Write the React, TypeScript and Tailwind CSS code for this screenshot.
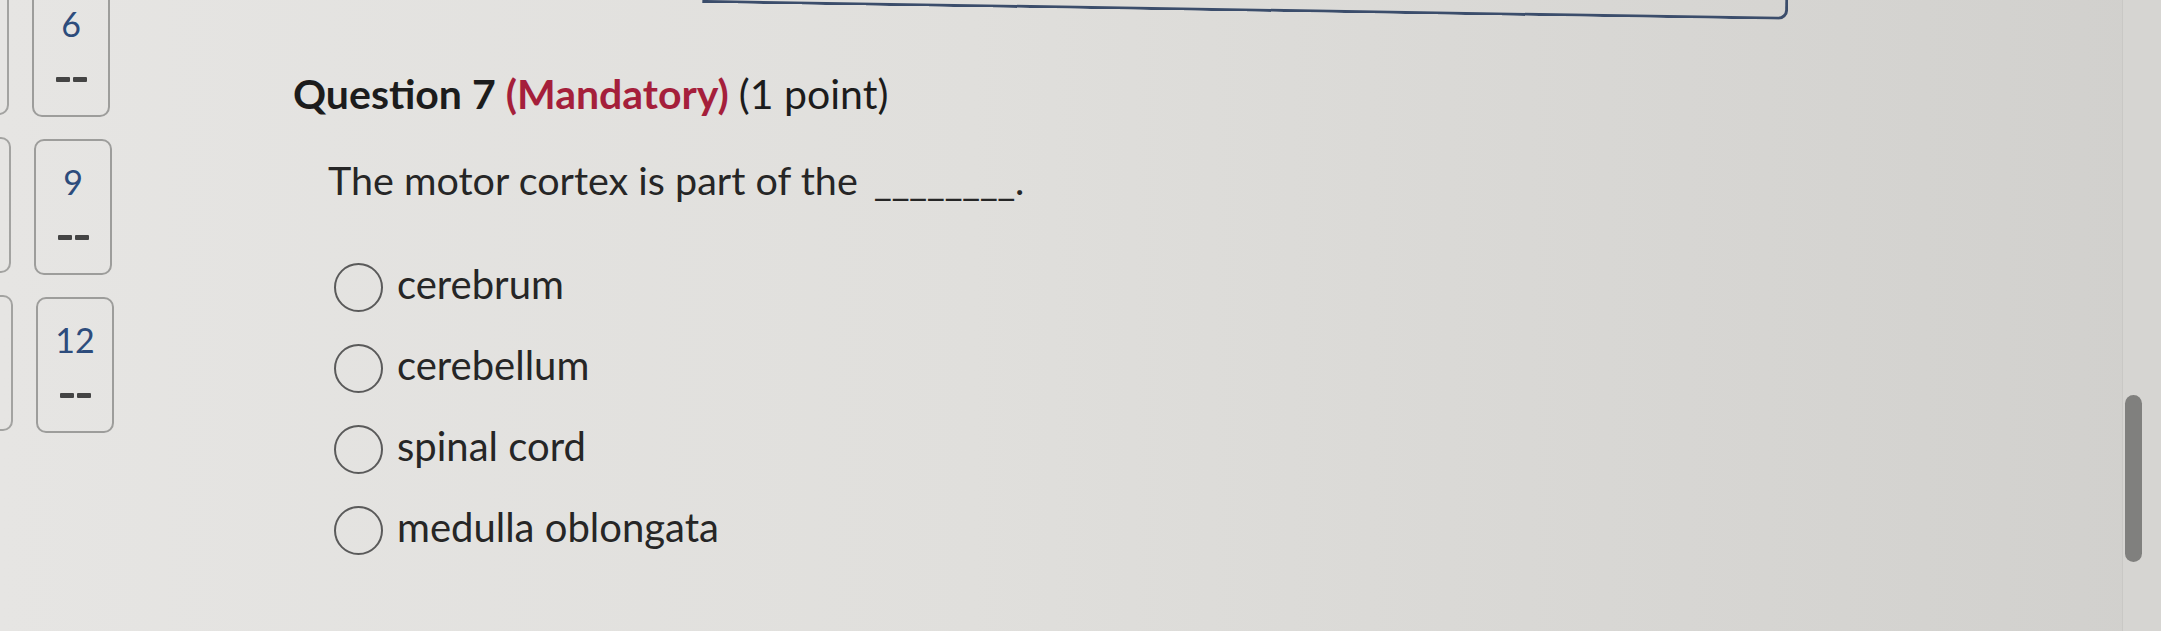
import React from "react";

const font = { fontFamily: "Lato, 'Noto Sans', 'Liberation Sans', sans-serif" };

function NavBox({ num, top }: { num: string; top?: boolean }) {
  return (
    <div
      className={
        "w-[78px] h-[136px] rounded-[10px] border-2 border-[#9d9d9b] flex flex-col items-center " +
        (top ? "-mt-[19px]" : "")
      }
    >
      <div className="mt-[21px] h-[40px] leading-[40px] text-[34px] text-[#2d4c7c]">{num}</div>
      <div className="mt-[33px] flex gap-[3px]">
        <div className="w-[14px] h-[5px] rounded-[1px] bg-[#444444]" />
        <div className="w-[14px] h-[5px] rounded-[1px] bg-[#444444]" />
      </div>
    </div>
  );
}

function Option({ label }: { label: string }) {
  return (
    <div className="flex items-center h-[50px]">
      <div className="w-[49px] h-[49px] rounded-full border-2 border-[#5a5a5a] shrink-0" />
      <div className="ml-[14px] text-[40px] leading-[50px] text-[#262626] -mt-[6px]">{label}</div>
    </div>
  );
}

export default function App() {
  return (
    <div
      className="w-[2161px] h-[631px] overflow-hidden flex bg-[linear-gradient(90deg,#e6e5e3_0%,#e0dfdc_45%,#d1d0cd_100%)]"
      style={font}
    >
      {/* left partial column */}
      <div className="flex flex-col gap-[22px] -ml-[69px] w-[78px] shrink-0">
        <div className="w-[78px] h-[136px] -mt-[21px] rounded-[10px] border-2 border-[#a3a3a1]" />
        <div className="w-[78px] h-[136px] rounded-[10px] border-2 border-[#a3a3a1] ml-[2px]" />
        <div className="w-[78px] h-[136px] rounded-[10px] border-2 border-[#a3a3a1] ml-[4px]" />
      </div>
      {/* question nav column */}
      <div className="flex flex-col gap-[22px] ml-[23px] shrink-0">
        <NavBox num="6" top />
        <div className="ml-[2px]">
          <NavBox num="9" />
        </div>
        <div className="ml-[4px]">
          <NavBox num="12" />
        </div>
      </div>
      {/* main */}
      <div className="flex-1 flex flex-col pl-[179px]">
        <div className="ml-[409px] w-[1086px] h-[40px] -mt-[20px] border-b-[3px] border-r-[3px] border-[#3b4d6b] rounded-br-[10px] rotate-[0.9deg] origin-bottom-right shrink-0" />
        <div className="mt-[49px] text-[41px] leading-[50px] font-bold text-[#1c1c1c] whitespace-nowrap">
          Question 7 <span className="text-[#a51f3b]">(Mandatory)</span>{" "}
          <span className="font-normal">(1 point)</span>
        </div>
        <div className="mt-[36px] ml-[35px] text-[39.5px] leading-[50px] text-[#262626] whitespace-nowrap">
          The motor cortex is part of the <span className="ml-[6px] tracking-[-0.5px]">________</span>.
        </div>
        <div className="mt-[57px] ml-[41px] flex flex-col gap-[31px]">
          <Option label="cerebrum" />
          <Option label="cerebellum" />
          <Option label="spinal cord" />
          <Option label="medulla oblongata" />
        </div>
      </div>
      {/* scrollbar track */}
      <div className="w-[39px] shrink-0 h-full border-l border-[#c9c8c5] bg-[#d6d5d2] flex flex-col">
        <div className="mt-[395px] ml-[2px] w-[17px] h-[167px] rounded-full bg-[#80807e]" />
      </div>
    </div>
  );
}
